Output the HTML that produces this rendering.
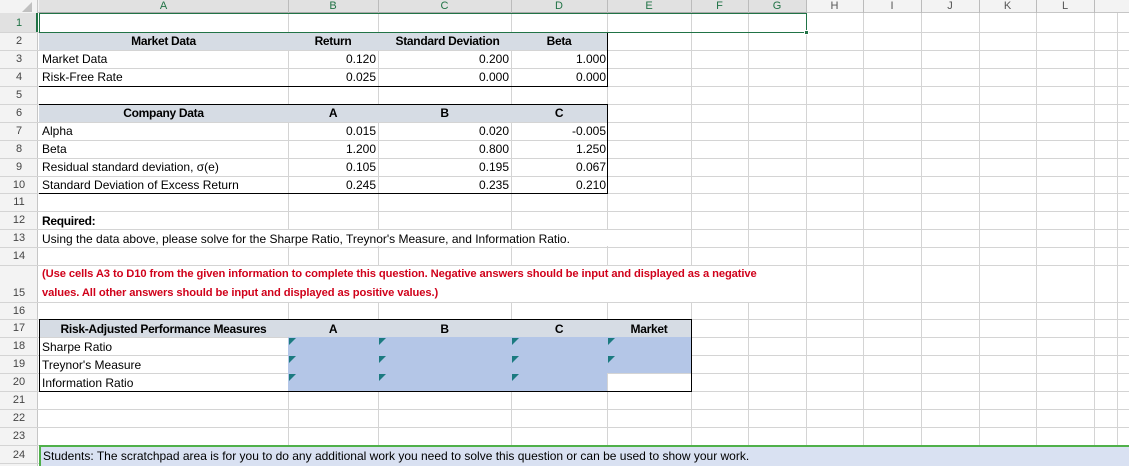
<!DOCTYPE html>
<html><head><meta charset="utf-8"><style>
*{margin:0;padding:0;box-sizing:border-box}
body{width:1129px;height:466px;overflow:hidden;background:#fff;font-family:"Liberation Sans",Arial,sans-serif;font-size:12px;color:#000;position:relative}
.a{position:absolute}
.v{position:absolute;width:1px;background:#d4d4d4}
.h{position:absolute;height:1px;background:#d4d4d4}
.t{position:absolute;height:18px;line-height:18px;white-space:nowrap}
.c{text-align:center}.r{text-align:right}.b{font-weight:bold;letter-spacing:-0.3px}
.rn{position:absolute;left:0;width:38px;text-align:center;color:#444;font-size:11px}
.cl{position:absolute;top:0;height:13px;line-height:13px;text-align:center;font-size:11px}
.tri{position:absolute;width:0;height:0;border-top:7px solid #1b7a80;border-right:7px solid transparent}
</style></head><body>
<div class="a" style="left:0;top:0;width:1129px;height:13px;background:#f3f3f3;border-bottom:1px solid #c6c6c6"></div>
<div class="a" style="left:39px;top:0;width:767px;height:13px;background:#e1e1e1;border-bottom:1px solid #aaa"></div>
<div class="a" style="left:0;top:0;width:38px;height:466px;background:#f3f3f3;border-right:1px solid #c6c6c6"></div>
<div class="a" style="left:0;top:13px;width:38px;height:19px;background:#e1e1e1;border-right:2px solid #217346"></div>
<div class="a" style="left:22px;top:2px;width:0;height:0;border-bottom:10px solid #c0c0c0;border-left:10px solid transparent"></div>
<div class="v" style="left:288px;top:13px;height:453px"></div>
<div class="v" style="left:378px;top:13px;height:453px"></div>
<div class="v" style="left:511px;top:13px;height:453px"></div>
<div class="v" style="left:607px;top:13px;height:453px"></div>
<div class="v" style="left:691px;top:13px;height:453px"></div>
<div class="v" style="left:748px;top:13px;height:453px"></div>
<div class="v" style="left:806px;top:13px;height:453px"></div>
<div class="v" style="left:863px;top:13px;height:453px"></div>
<div class="v" style="left:921px;top:13px;height:453px"></div>
<div class="v" style="left:979px;top:13px;height:453px"></div>
<div class="v" style="left:1036px;top:13px;height:453px"></div>
<div class="v" style="left:1094px;top:13px;height:453px"></div>
<div class="v" style="left:1117px;top:13px;height:453px"></div>
<div class="v" style="left:288px;top:0;height:13px;background:#bbb"></div>
<div class="v" style="left:378px;top:0;height:13px;background:#bbb"></div>
<div class="v" style="left:511px;top:0;height:13px;background:#bbb"></div>
<div class="v" style="left:607px;top:0;height:13px;background:#bbb"></div>
<div class="v" style="left:691px;top:0;height:13px;background:#bbb"></div>
<div class="v" style="left:748px;top:0;height:13px;background:#bbb"></div>
<div class="v" style="left:806px;top:0;height:13px;background:#bbb"></div>
<div class="v" style="left:863px;top:0;height:13px;background:#bbb"></div>
<div class="v" style="left:921px;top:0;height:13px;background:#bbb"></div>
<div class="v" style="left:979px;top:0;height:13px;background:#bbb"></div>
<div class="v" style="left:1036px;top:0;height:13px;background:#bbb"></div>
<div class="v" style="left:1094px;top:0;height:13px;background:#bbb"></div>
<div class="h" style="left:0;top:32px;width:1129px"></div>
<div class="h" style="left:0;top:50px;width:1129px"></div>
<div class="h" style="left:0;top:68px;width:1129px"></div>
<div class="h" style="left:0;top:86px;width:1129px"></div>
<div class="h" style="left:0;top:104px;width:1129px"></div>
<div class="h" style="left:0;top:122px;width:1129px"></div>
<div class="h" style="left:0;top:140px;width:1129px"></div>
<div class="h" style="left:0;top:158px;width:1129px"></div>
<div class="h" style="left:0;top:176px;width:1129px"></div>
<div class="h" style="left:0;top:193px;width:1129px"></div>
<div class="h" style="left:0;top:211px;width:1129px"></div>
<div class="h" style="left:0;top:229px;width:1129px"></div>
<div class="h" style="left:0;top:247px;width:1129px"></div>
<div class="h" style="left:0;top:265px;width:1129px"></div>
<div class="h" style="left:0;top:302px;width:1129px"></div>
<div class="h" style="left:0;top:319px;width:1129px"></div>
<div class="h" style="left:0;top:337px;width:1129px"></div>
<div class="h" style="left:0;top:355px;width:1129px"></div>
<div class="h" style="left:0;top:373px;width:1129px"></div>
<div class="h" style="left:0;top:391px;width:1129px"></div>
<div class="h" style="left:0;top:409px;width:1129px"></div>
<div class="h" style="left:0;top:427px;width:1129px"></div>
<div class="h" style="left:0;top:445px;width:1129px"></div>
<div class="h" style="left:0;top:463px;width:1129px"></div>
<div class="a" style="left:39px;top:266px;width:767px;height:36px;background:#fff"></div>
<div class="a" style="left:39px;top:33px;width:568px;height:17px;background:#d6dce4"></div>
<div class="a" style="left:39px;top:105px;width:568px;height:17px;background:#d6dce4"></div>
<div class="a" style="left:39px;top:320px;width:652px;height:17px;background:#d6dce4"></div>
<div class="a" style="left:288px;top:337px;width:319px;height:54px;background:#b4c6e7"></div>
<div class="a" style="left:607px;top:337px;width:84px;height:36px;background:#b4c6e7"></div>
<div class="a" style="left:39px;top:446px;width:1090px;height:20px;background:#d9e1f2"></div>
<div class="a" style="left:39px;top:445px;width:1090px;height:2px;background:#4fb04a"></div>
<div class="a" style="left:39px;top:446px;width:2px;height:20px;background:#4fb04a"></div>
<div class="a" style="left:39px;top:86px;width:569px;height:1px;background:#000"></div>
<div class="a" style="left:607px;top:32px;width:1px;height:55px;background:#000"></div>
<div class="a" style="left:39px;top:104px;width:569px;height:1px;background:#000"></div>
<div class="a" style="left:39px;top:193px;width:569px;height:1px;background:#000"></div>
<div class="a" style="left:607px;top:104px;width:1px;height:90px;background:#000"></div>
<div class="a" style="left:39px;top:319px;width:653px;height:73px;border:1px solid #000"></div>
<div class="a" style="left:39px;top:13px;width:768px;height:20px;border:1px solid #217346"></div>
<div class="a" style="left:804px;top:30px;width:5px;height:5px;background:#217346;border:1px solid #fff"></div>
<div class="cl" style="left:39px;width:249px;color:#217346">A</div>
<div class="cl" style="left:288px;width:90px;color:#217346">B</div>
<div class="cl" style="left:378px;width:133px;color:#217346">C</div>
<div class="cl" style="left:511px;width:96px;color:#217346">D</div>
<div class="cl" style="left:607px;width:84px;color:#217346">E</div>
<div class="cl" style="left:691px;width:57px;color:#217346">F</div>
<div class="cl" style="left:748px;width:58px;color:#217346">G</div>
<div class="cl" style="left:806px;width:57px;color:#555">H</div>
<div class="cl" style="left:863px;width:58px;color:#555">I</div>
<div class="cl" style="left:921px;width:58px;color:#555">J</div>
<div class="cl" style="left:979px;width:57px;color:#555">K</div>
<div class="cl" style="left:1036px;width:58px;color:#555">L</div>
<div class="rn" style="top:14px;line-height:18px;color:#217346">1</div>
<div class="rn" style="top:32px;line-height:18px">2</div>
<div class="rn" style="top:50px;line-height:18px">3</div>
<div class="rn" style="top:68px;line-height:18px">4</div>
<div class="rn" style="top:86px;line-height:18px">5</div>
<div class="rn" style="top:104px;line-height:18px">6</div>
<div class="rn" style="top:122px;line-height:18px">7</div>
<div class="rn" style="top:140px;line-height:18px">8</div>
<div class="rn" style="top:158px;line-height:18px">9</div>
<div class="rn" style="top:176px;line-height:18px">10</div>
<div class="rn" style="top:193px;line-height:18px">11</div>
<div class="rn" style="top:211px;line-height:18px">12</div>
<div class="rn" style="top:229px;line-height:18px">13</div>
<div class="rn" style="top:247px;line-height:18px">14</div>
<div class="rn" style="top:284px;line-height:18px">15</div>
<div class="rn" style="top:302px;line-height:18px">16</div>
<div class="rn" style="top:319px;line-height:18px">17</div>
<div class="rn" style="top:337px;line-height:18px">18</div>
<div class="rn" style="top:355px;line-height:18px">19</div>
<div class="rn" style="top:373px;line-height:18px">20</div>
<div class="rn" style="top:391px;line-height:18px">21</div>
<div class="rn" style="top:409px;line-height:18px">22</div>
<div class="rn" style="top:427px;line-height:18px">23</div>
<div class="rn" style="top:446px;line-height:18px">24</div>
<div class="t c b" style="left:39px;top:32px;width:249px">Market Data</div>
<div class="t c b" style="left:288px;top:32px;width:90px">Return</div>
<div class="t c b" style="left:378px;top:32px;width:229px;padding-right:90px">Standard Deviation</div>
<div class="t c b" style="left:511px;top:32px;width:96px">Beta</div>
<div class="t" style="left:42px;top:50px">Market Data</div>
<div class="t r" style="left:288px;top:50px;width:88px">0.120</div>
<div class="t r" style="left:378px;top:50px;width:131px">0.200</div>
<div class="t r" style="left:511px;top:50px;width:95px">1.000</div>
<div class="t" style="left:42px;top:68px">Risk-Free Rate</div>
<div class="t r" style="left:288px;top:68px;width:88px">0.025</div>
<div class="t r" style="left:378px;top:68px;width:131px">0.000</div>
<div class="t r" style="left:511px;top:68px;width:95px">0.000</div>
<div class="t c b" style="left:39px;top:104px;width:249px">Company Data</div>
<div class="t c b" style="left:288px;top:104px;width:90px">A</div>
<div class="t c b" style="left:378px;top:104px;width:133px">B</div>
<div class="t c b" style="left:511px;top:104px;width:96px">C</div>
<div class="t" style="left:42px;top:122px">Alpha</div>
<div class="t r" style="left:288px;top:122px;width:88px">0.015</div>
<div class="t r" style="left:378px;top:122px;width:131px">0.020</div>
<div class="t r" style="left:511px;top:122px;width:95px">-0.005</div>
<div class="t" style="left:42px;top:140px">Beta</div>
<div class="t r" style="left:288px;top:140px;width:88px">1.200</div>
<div class="t r" style="left:378px;top:140px;width:131px">0.800</div>
<div class="t r" style="left:511px;top:140px;width:95px">1.250</div>
<div class="t" style="left:42px;top:158px">Residual standard deviation, σ(e)</div>
<div class="t r" style="left:288px;top:158px;width:88px">0.105</div>
<div class="t r" style="left:378px;top:158px;width:131px">0.195</div>
<div class="t r" style="left:511px;top:158px;width:95px">0.067</div>
<div class="t" style="left:42px;top:176px">Standard Deviation of Excess Return</div>
<div class="t r" style="left:288px;top:176px;width:88px">0.245</div>
<div class="t r" style="left:378px;top:176px;width:131px">0.235</div>
<div class="t r" style="left:511px;top:176px;width:95px">0.210</div>
<div class="t b" style="left:42px;top:212px">Required:</div>
<div class="a" style="left:40px;top:230px;width:600px;height:16px;background:#fff"></div>
<div class="t" style="left:42px;top:230px">Using the data above, please solve for the Sharpe Ratio, Treynor's Measure, and Information Ratio.</div>
<div class="t" style="left:42px;top:265px;color:#d0021b;font-weight:bold;font-size:11.2px;letter-spacing:-0.1px">(Use cells A3 to D10 from the given information to complete this question. Negative answers should be input and displayed as a negative</div>
<div class="t" style="left:42px;top:284px;color:#d0021b;font-weight:bold;font-size:11.2px;letter-spacing:-0.1px">values. All other answers should be input and displayed as positive values.)</div>
<div class="t c b" style="left:39px;top:320px;width:249px">Risk-Adjusted Performance Measures</div>
<div class="t c b" style="left:288px;top:320px;width:90px">A</div>
<div class="t c b" style="left:378px;top:320px;width:133px">B</div>
<div class="t c b" style="left:511px;top:320px;width:96px">C</div>
<div class="t c b" style="left:607px;top:320px;width:84px">Market</div>
<div class="t" style="left:42px;top:338px">Sharpe Ratio</div>
<div class="t" style="left:42px;top:356px">Treynor's Measure</div>
<div class="t" style="left:42px;top:374px">Information Ratio</div>
<div class="tri" style="left:289px;top:338px"></div>
<div class="tri" style="left:379px;top:338px"></div>
<div class="tri" style="left:512px;top:338px"></div>
<div class="tri" style="left:608px;top:338px"></div>
<div class="tri" style="left:289px;top:356px"></div>
<div class="tri" style="left:379px;top:356px"></div>
<div class="tri" style="left:512px;top:356px"></div>
<div class="tri" style="left:608px;top:356px"></div>
<div class="tri" style="left:289px;top:374px"></div>
<div class="tri" style="left:379px;top:374px"></div>
<div class="tri" style="left:512px;top:374px"></div>
<div class="t" style="left:43px;top:447px">Students: The scratchpad area is for you to do any additional work you need to solve this question or can be used to show your work.</div>
</body></html>
